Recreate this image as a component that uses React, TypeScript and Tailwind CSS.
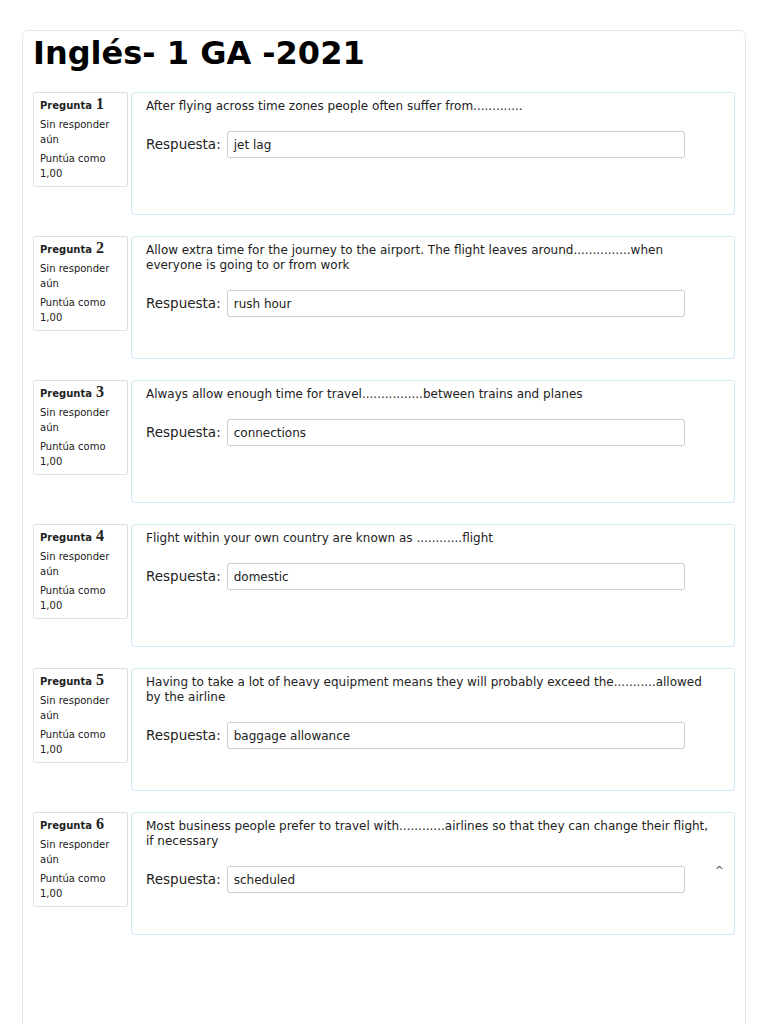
import React from "react";

type Question = {
  num: number;
  text: string;
  answer: string;
};

const questions: Question[] = [
  {
    num: 1,
    text: "After flying across time zones people often suffer from.............",
    answer: "jet lag",
  },
  {
    num: 2,
    text: "Allow extra time for the journey to the airport. The flight leaves around...............when everyone is going to or from work",
    answer: "rush hour",
  },
  {
    num: 3,
    text: "Always allow enough time for travel................between trains and planes",
    answer: "connections",
  },
  {
    num: 4,
    text: "Flight within your own country are known as ............flight",
    answer: "domestic",
  },
  {
    num: 5,
    text: "Having to take a lot of heavy equipment means they will probably exceed the...........allowed by the airline",
    answer: "baggage allowance",
  },
  {
    num: 6,
    text: "Most business people prefer to travel with............airlines so that they can change their flight, if necessary",
    answer: "scheduled",
  },
];

function QuestionBlock({ q, last }: { q: Question; last: boolean }) {
  return (
    <div className="flex items-start gap-[3px]">
      <div className="h-[95px] w-[95px] shrink-0 rounded-[2px] border border-[#dedede] px-[6px] pt-[3px] text-[10px] leading-[15px] text-[#222]">
        <div className="flex items-baseline gap-[4px]">
          <span className="font-bold">Pregunta</span>
          <span className="font-['Liberation_Serif',serif] text-[16px] font-bold leading-[15px]">{q.num}</span>
        </div>
        <div className="mt-[4px]">Sin responder aún</div>
        <div className="mt-[4px]">Puntúa como 1,00</div>
      </div>
      <div className="relative h-[123px] min-w-0 flex-1 rounded-[4px] border border-[#cfe9f2] pl-[14px] pr-[24px] pt-[6px]">
        <p className="text-[12px] leading-[15px] text-[#222]">{q.text}</p>
        <div className="mt-[17px] flex items-center gap-[6px]">
          <span className="text-[13.5px] text-[#222]">Respuesta:</span>
          <div className="flex h-[27px] w-[458px] items-center rounded-[3px] border border-[#cccccc] px-[6px] text-[12px] text-[#222]">
            {q.answer}
          </div>
        </div>
        {last ? (
          <span className="absolute right-[10px] top-[50px] text-[11px] text-[#555]">^</span>
        ) : null}
      </div>
    </div>
  );
}

export default function App() {
  return (
    <div className="min-h-[1024px] bg-white pt-[30px] font-['DejaVu_Sans',Verdana,sans-serif]">
      <div className="mx-[22px] h-[1000px] rounded-t-[6px] border border-b-0 border-[#e6e6e6] px-[10px] pt-[2px]">
        <h1 className="text-[32px] font-bold leading-[40px] text-black">Inglés- 1 GA -2021</h1>
        <div className="mt-[19px] flex flex-col gap-[21px]">
          {questions.map((q, i) => (
            <QuestionBlock key={q.num} q={q} last={i === questions.length - 1} />
          ))}
        </div>
      </div>
    </div>
  );
}
